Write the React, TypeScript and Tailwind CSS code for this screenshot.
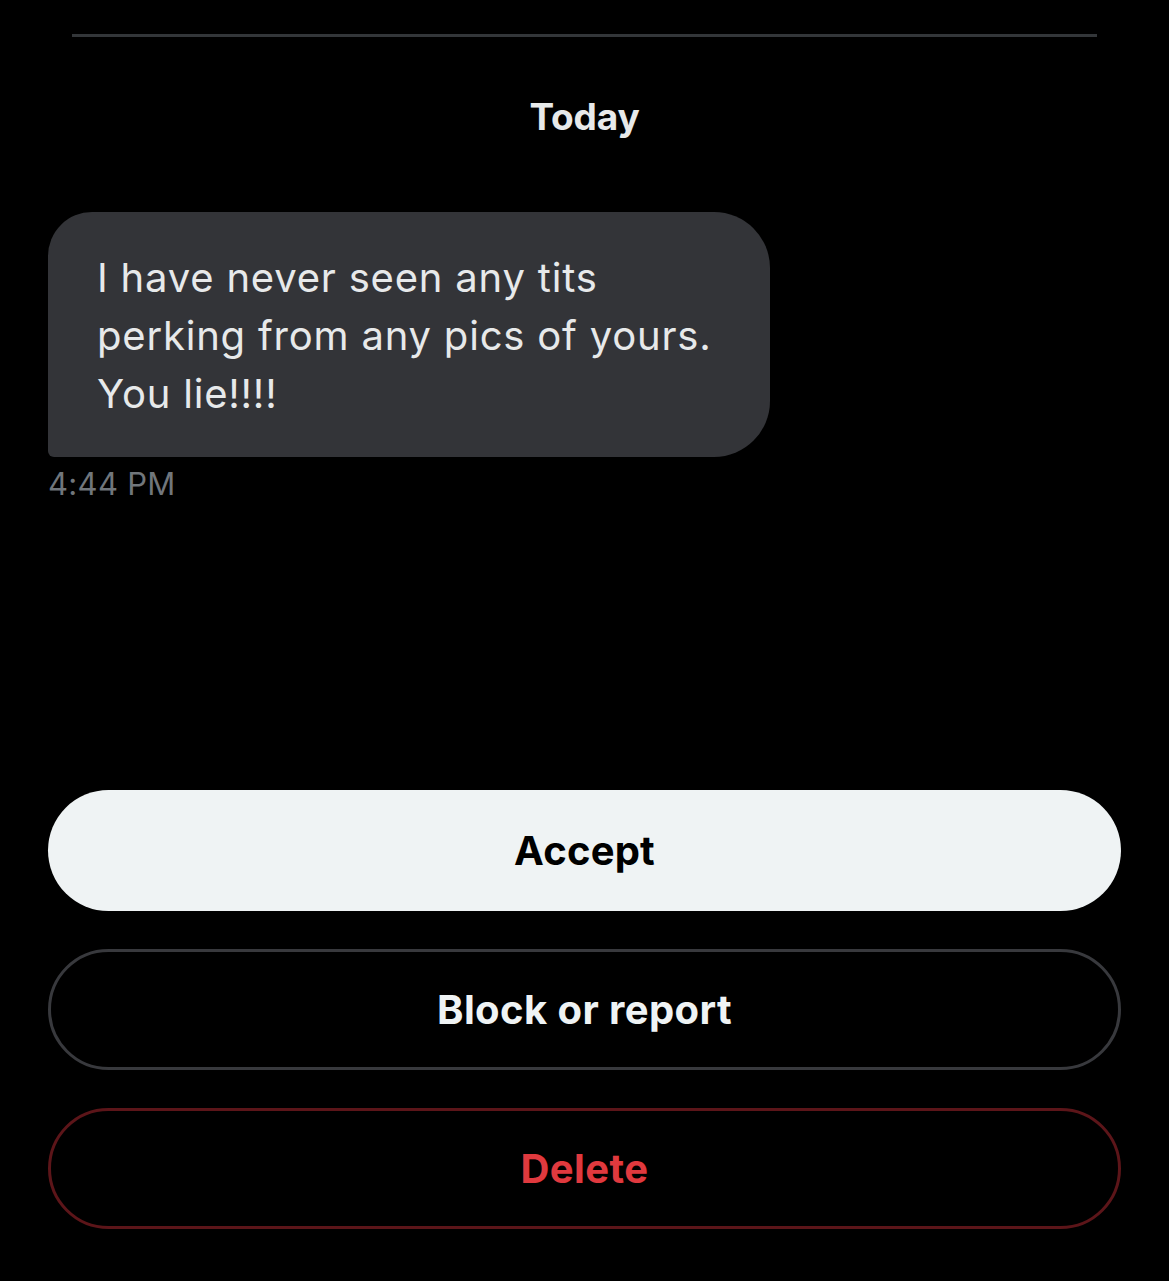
import React from "react";

export default function App() {
  return (
    <div
      className="w-[1169px] h-[1281px] bg-black flex flex-col overflow-hidden"
      style={{ fontFamily: "Inter, 'Noto Sans', Roboto, sans-serif" }}
    >
      <div className="pt-[34px] px-[72px]">
        <div className="h-[3px] bg-[#333639]" />
      </div>
      <div className="mt-[56px] flex justify-center">
        <span className="text-[37px] leading-[48px] font-bold text-[#e7e9ea] tracking-[-0.2px]">Today</span>
      </div>
      <div className="mt-[71px] px-[48px] flex flex-col items-start">
        <div className="w-[722px] h-[245px] bg-[#333438] rounded-tl-[44px] rounded-tr-[56px] rounded-br-[56px] rounded-bl-[6px] pl-[49px] pr-[10px] pt-[37px]">
          <p className="text-[40px] leading-[58px] text-[#e7e9ea] tracking-[0.8px] whitespace-nowrap">
            I have never seen any tits
            <br />
            perking from any pics of yours.
            <br />
            You lie!!!!
          </p>
        </div>
        <div className="mt-[8px] text-[31px] leading-[38px] text-[#71767b] tracking-[0.3px]">4:44 PM</div>
      </div>
      <div className="mt-[287px] px-[48px] flex flex-col gap-[38px]">
        <div className="h-[121px] rounded-full bg-[#eff3f4] flex items-center justify-center">
          <span className="text-[40px] font-bold text-black tracking-[0.2px]">Accept</span>
        </div>
        <div className="h-[121px] rounded-full border-[3px] border-[#38393d] flex items-center justify-center">
          <span className="text-[40px] font-bold text-[#eff3f4] tracking-[0.4px]">Block or report</span>
        </div>
        <div className="h-[121px] rounded-full border-[3px] border-[#5c1519] flex items-center justify-center">
          <span className="text-[40px] font-bold text-[#e0393e] tracking-[0.4px]">Delete</span>
        </div>
      </div>
    </div>
  );
}
